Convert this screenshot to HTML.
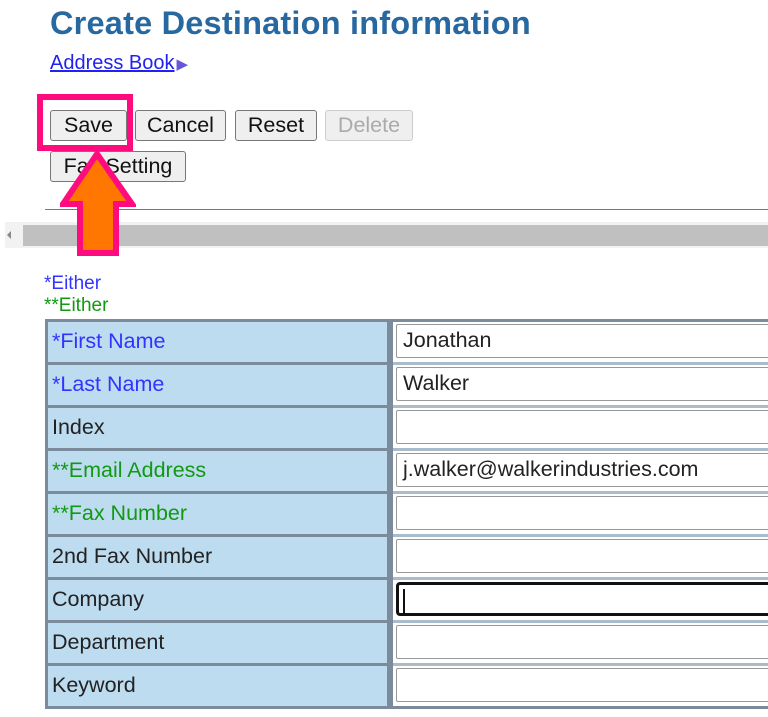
<!DOCTYPE html>
<html><head><meta charset="utf-8"><style>
body{margin:0;width:768px;height:717px;overflow:hidden;background:#fff;font-family:"Liberation Sans",Arial,sans-serif;position:relative}
.a{position:absolute}
h1{position:absolute;left:50px;top:5px;margin:0;font-size:32.5px;font-weight:bold;color:#2868a0;letter-spacing:0.2px}
.link{left:50px;top:52px;font-size:20px;color:#2222ee;text-decoration:underline}
.btn{position:absolute;height:31px;border:1px solid #777;border-radius:3px;background:#efefef;font-size:21.5px;color:#111;box-sizing:border-box;text-align:center;line-height:29px}
.lab{position:absolute;left:48px;width:339px;height:40px;background:#bddcf0;font-size:21.5px;line-height:38px;box-sizing:border-box;padding-left:4px;color:#222}
.inp{position:absolute;left:396px;width:380px;height:34px;border:1px solid #999;border-radius:2px;box-sizing:border-box;background:#fff;font-size:21.5px;line-height:31px;padding-left:6px;color:#222}
</style></head><body>
<h1>Create Destination information</h1>
<div class="a link">Address Book<span style="color:#6655dd;text-decoration:none;font-size:15px;display:inline-block;margin-left:2px">&#9654;</span></div>

<div class="btn" style="left:50px;top:110px;width:77px">Save</div>
<div class="btn" style="left:135px;top:110px;width:91px">Cancel</div>
<div class="btn" style="left:235px;top:110px;width:82px">Reset</div>
<div class="btn" style="left:325px;top:110px;width:88px;color:#aaa;border-color:#ccc">Delete</div>
<div class="btn" style="left:50px;top:151px;width:136px">Fax Setting</div>

<div class="a" style="left:45px;top:209px;width:723px;height:1px;background:#777"></div>
<div class="a" style="left:5px;top:222px;width:763px;height:26px;background:#f2f2f2"></div>
<div class="a" style="left:23px;top:225px;width:745px;height:21px;background:#c0c0c0"></div>
<div class="a" style="left:7px;top:231px;width:0;height:0;border-top:4px solid transparent;border-bottom:4px solid transparent;border-right:4px solid #888"></div>

<div class="a" style="left:37px;top:94px;width:96px;height:57px;box-sizing:border-box;border:6px solid #ff0b80"></div>
<svg class="a" style="left:60px;top:146px;z-index:5" width="76" height="112" viewBox="0 0 76 112">
<path d="M37 8 L72 58 L56 58 L56 107 L20 107 L20 58 L3 58 Z" fill="#ff7700" stroke="#ff0b80" stroke-width="6" stroke-linejoin="miter"/>
</svg>

<div class="a" style="left:44px;top:273px;font-size:19px;color:#3333ff">*Either</div>
<div class="a" style="left:44px;top:295px;font-size:19px;color:#119911">**Either</div>

<div class="a" style="left:45px;top:319px;width:730px;height:390px;background:#7b8b9b"></div>
<div class="a" style="left:390px;top:322px;width:380px;height:384px;background:#fff"></div>

<div class="lab" style="top:322px;color:#3333ff">*First Name</div>
<div class="lab" style="top:365px;color:#3333ff">*Last Name</div>
<div class="lab" style="top:408px">Index</div>
<div class="lab" style="top:451px;color:#119911">**Email Address</div>
<div class="lab" style="top:494px;color:#119911">**Fax Number</div>
<div class="lab" style="top:537px">2nd Fax Number</div>
<div class="lab" style="top:580px">Company</div>
<div class="lab" style="top:623px">Department</div>
<div class="lab" style="top:666px">Keyword</div>
<div class="a" style="left:390px;top:322px;width:3px;height:384px;background:#7b8b9b"></div>
<div class="a" style="left:393px;top:362px;width:380px;height:3px;background:#a8bccc"></div>
<div class="a" style="left:393px;top:405px;width:380px;height:3px;background:#a8bccc"></div>
<div class="a" style="left:393px;top:448px;width:380px;height:3px;background:#a8bccc"></div>
<div class="a" style="left:393px;top:491px;width:380px;height:3px;background:#a8bccc"></div>
<div class="a" style="left:393px;top:534px;width:380px;height:3px;background:#a8bccc"></div>
<div class="a" style="left:393px;top:577px;width:380px;height:3px;background:#a8bccc"></div>
<div class="a" style="left:393px;top:620px;width:380px;height:3px;background:#a8bccc"></div>
<div class="a" style="left:393px;top:663px;width:380px;height:3px;background:#a8bccc"></div>

<div class="inp" style="top:324px">Jonathan</div>
<div class="inp" style="top:367px">Walker</div>
<div class="inp" style="top:410px"></div>
<div class="inp" style="top:453px">j.walker@walkerindustries.com</div>
<div class="inp" style="top:496px"></div>
<div class="inp" style="top:539px"></div>
<div class="inp" style="top:582px;border:3px solid #111;border-radius:4px"><span style="display:inline-block;width:2px;height:24px;background:#111;vertical-align:middle;margin-left:-2px"></span></div>
<div class="inp" style="top:625px"></div>
<div class="inp" style="top:668px"></div>
</body></html>
